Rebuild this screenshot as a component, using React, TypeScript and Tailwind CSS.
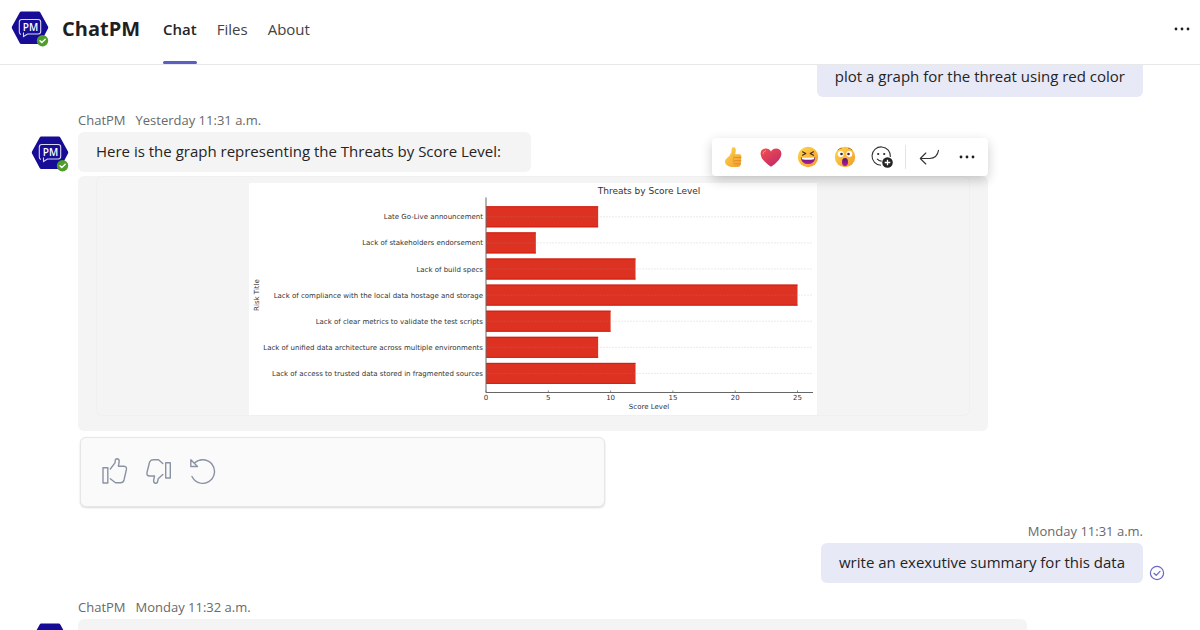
import { useState } from 'react';
import type { ReactNode } from 'react';

const threats = [
    { title: 'Late Go-Live announcement', score: 9 },
    { title: 'Lack of stakeholders endorsement', score: 4 },
    { title: 'Lack of build specs', score: 12 },
    { title: 'Lack of compliance with the local data hostage and storage', score: 25 },
    { title: 'Lack of clear metrics to validate the test scripts', score: 10 },
    { title: 'Lack of unified data architecture across multiple environments', score: 9 },
    { title: 'Lack of access to trusted data stored in fragmented sources', score: 12 },
];

const tabs = ['Chat', 'Files', 'About'];

const Avatar = () => (
    <svg viewBox="0 0 38 36" className="w-[38px] h-9 shrink-0" role="img" aria-label="ChatPM, available">
        <path d="M10.2 .5h17.6q1 0 1.5.9l7.7 14.2q.5 1 0 2l-7.7 14.4q-.5.9-1.5.9H10.2q-1 0-1.5-.9L1 17.6q-.5-1 0-2L8.7 1.4q.5-.9 1.5-.9z" fill="#170c96" />
        <path d="M10 23.5q-1.7-.6-1.7-2.5v-10q0-2.5 2.5-2.5h16.4q2.5 0 2.5 2.5v9.5q0 2.5-2.5 2.5H16.5L12.500 25.500V21.500" fill="none" stroke="#d9d7f2" strokeWidth="1.1" />
        <text x="19.5" y="19.500" textAnchor="middle" fontSize="10" fontWeight="600" fill="#fff" className="font-['Open_Sans',sans-serif]">PM</text>
        <circle cx="31.5" cy="29.7" r="5.7" fill="#4f9e2c" />
        <path d="M29 29.8l1.8 1.8 3.4-3.4" fill="none" stroke="#fff" strokeWidth="1.4" strokeLinecap="round" />
    </svg>
);

const Dots = () => (
    <svg viewBox="0 0 16 4" className="w-4 h-1" aria-hidden="true">
        <circle cx="2" cy="2" r="1.4" fill="#1f1f1f" />
        <circle cx="8" cy="2" r="1.4" fill="#1f1f1f" />
        <circle cx="14" cy="2" r="1.4" fill="#1f1f1f" />
    </svg>
);

const Gradients = () => (
    <svg className="absolute w-0 h-0" aria-hidden="true">
        <defs>
            <linearGradient id="skin" x1="0" y1="0" x2="1" y2="1">
                <stop offset="0" stopColor="#ffd84a" />
                <stop offset="1" stopColor="#f29a2e" />
            </linearGradient>
            <linearGradient id="heart" x1="0" y1="0" x2=".7" y2="1">
                <stop offset="0" stopColor="#f5504a" />
                <stop offset="1" stopColor="#c22a6b" />
            </linearGradient>
            <linearGradient id="mouth" x1="0" y1="0" x2="0" y2="1">
                <stop offset="0" stopColor="#5c1668" />
                <stop offset="1" stopColor="#b01ba5" />
            </linearGradient>
        </defs>
    </svg>
);

const Like = () => (
    <svg viewBox="0 0 22 22" className="w-[22px] h-[22px]">
        <path d="M3.5 12.5Q7 10 8.3 6.5L8.8 2.5Q9.2 1 10.8 1.2Q12.9 1.5 12.8 4.5L12.2 8.2H16.5Q18.3 8.4 18.3 10.2L17.8 18.5Q17.200 21 14.500 21H9Q6 21 3.3 18.8Q1.800 17.500 2 15.500Q2.200 13.600 3.500 12.500Z" fill="url(#skin)" />
        <path d="M11.500 11.500h6.500M11.300 14.700h6.600M11.800 17.800h5.800" stroke="#dc8526" strokeWidth=".8" strokeLinecap="round" />
        <path d="M11.500 9.500q-1.500.8-.6 2.300-1.100 1.400-.1 2.900-.7 1.500.5 2.800" fill="none" stroke="#e4952c" strokeWidth=".7" />
    </svg>
);

const Heart = () => (
    <svg viewBox="0 0 22 22" className="w-[22px] h-[22px]">
        <path d="M11 20.800Q1 14 .6 8.200Q.5 3.200 5.300 2.500Q9.300 2.200 11 5.500Q12.700 2.200 16.700 2.500Q21.500 3.200 21.400 8.200Q21 14 11 20.800Z" fill="url(#heart)" />
        <path d="M3 7.500q.4-2.400 2.600-2.800" fill="none" stroke="#ff8d80" strokeWidth="1" strokeLinecap="round" />
    </svg>
);

const Laugh = () => (
    <svg viewBox="0 0 22 22" className="w-[22px] h-[22px]">
        <circle cx="11" cy="11" r="10.2" fill="url(#skin)" />
        <path d="M5.5 5.8l3.3 1.7-3.3 1.7M16.5 5.8l-3.3 1.7 3.3 1.7" fill="none" stroke="#4a2b22" strokeWidth="1.2" strokeLinecap="round" strokeLinejoin="round" />
        <path d="M3.8 11.2h14.4q-.5 6.800-7.200 6.800t-7.200-6.800z" fill="url(#mouth)" />
        <path d="M4.5 11.2h13l-.5 2q-6 1-12 0z" fill="#fff" />
    </svg>
);

const Surprised = () => (
    <svg viewBox="0 0 22 22" className="w-[22px] h-[22px]">
        <circle cx="11" cy="11" r="10.2" fill="url(#skin)" />
        <path d="M4 3.8q1.5-1.6 3.5-1.6M18 3.8q-1.5-1.6-3.5-1.6" fill="none" stroke="#a5632a" strokeWidth=".8" strokeLinecap="round" />
        <circle cx="6.7" cy="8" r="3" fill="#fff" />
        <circle cx="15.3" cy="8" r="3" fill="#fff" />
        <circle cx="7.5" cy="8" r="1.3" fill="#3b2430" />
        <circle cx="14.5" cy="8" r="1.3" fill="#3b2430" />
        <ellipse cx="11" cy="16" rx="3" ry="3.9" fill="url(#mouth)" />
    </svg>
);

const AddReaction = () => (
    <svg viewBox="0 0 22 22" className="w-[22px] h-[22px]" fill="none">
        <path d="M10 19.3A9.2 9.2 0 1 1 19.4 11" stroke="#333" strokeWidth="1.1" />
        <circle cx="7.2" cy="8" r="1.1" fill="#222" />
        <circle cx="13.2" cy="8" r="1.1" fill="#222" />
        <path d="M6.3 13.2q1.6 1.9 4 1.9" stroke="#333" strokeWidth="1.1" strokeLinecap="round" />
        <circle cx="16.5" cy="16.5" r="5.3" fill="#242424" />
        <path d="M16.5 13.7v5.6M13.7 16.5h5.6" stroke="#fff" strokeWidth="1.3" />
    </svg>
);

const Reply = () => (
    <svg viewBox="0 0 22 22" className="w-[22px] h-[22px]" fill="none" stroke="#333" strokeWidth="1.1" strokeLinecap="round" strokeLinejoin="round">
        <path d="M6.8 7L1.300 12.500l5.500 5.500M1.500 12.500h9q7.800-.4 9-8.200" />
    </svg>
);

const reactions = [
    { label: 'Like', icon: <Like /> },
    { label: 'Heart', icon: <Heart /> },
    { label: 'Laugh', icon: <Laugh /> },
    { label: 'Surprised', icon: <Surprised /> },
    { label: 'More reactions', icon: <AddReaction /> },
];

const ToolButton = ({ label, children }: { label: string; children: ReactNode }) => (
    <button aria-label={label} className="flex w-[37px] h-9 items-center justify-center">
        {children}
    </button>
);

const ReactionBar = () => (
    <div className="absolute right-0 -top-[38px] z-10 flex h-[38px] items-center rounded bg-white px-[3px] shadow-[0_4px_12px_rgba(0,0,0,0.2)]">
        {reactions.map((r) => (
            <ToolButton key={r.label} label={r.label}>{r.icon}</ToolButton>
        ))}
        <div className="mx-[5px] h-6 w-px bg-[#e4e4e4]" />
        <ToolButton label="Reply"><Reply /></ToolButton>
        <ToolButton label="More options"><Dots /></ToolButton>
    </div>
);

const ThreatChart = () => {
    const x0 = 237;
    const unit = 12.46;
    const rowY = (i: number) => 33.8 + i * 26.1;

    return (
        <svg viewBox="0 0 568 232" className="w-full max-w-[568px] bg-white font-['DejaVu_Sans',sans-serif]" role="img" aria-label="Threats by Score Level">
            <text x="400" y="11" textAnchor="middle" fontSize="9" fill="#333">Threats by Score Level</text>
            {threats.map((t, i) => (
                <g key={t.title}>
                    <rect x={x0} y={rowY(i) - 10.5} width={t.score * unit} height="21" fill="#dd3222" />
                    <path d={`M${x0} ${rowY(i) - 10}h${t.score * unit}m0 20H${x0}`} stroke="#cf1f10" strokeWidth="1" fill="none" />
                    <path d={`M${x0} ${rowY(i)}H564`} stroke="#999" strokeOpacity=".3" strokeDasharray="2 1" strokeWidth=".7" />
                    <text x="234" y={rowY(i) + 2.5} textAnchor="end" fontSize="7" fill="#333">{t.title}</text>
                </g>
            ))}
            <path d="M237 14.5V209.5H564" fill="none" stroke="#666" strokeWidth="1" />
            {[0, 5, 10, 15, 20, 25].map((n) => (
                <g key={n}>
                    <path d={`M${x0 + n * unit} 209.5v-2`} stroke="#666" strokeWidth=".8" />
                    <text x={x0 + n * unit} y="217" textAnchor="middle" fontSize="7" fill="#333">{n}</text>
                </g>
            ))}
            <text x="400" y="226" textAnchor="middle" fontSize="7" fill="#333">Score Level</text>
            <text transform="translate(10 112) rotate(-90)" textAnchor="middle" fontSize="7" fill="#333">Risk Title</text>
        </svg>
    );
};

const FeedbackCard = () => (
    <div className="mt-1.5 ml-0.5 flex h-[70px] max-w-[525px] items-center gap-[18px] rounded-md border border-[#e6e6e6] bg-[#fafafa] px-[21px] pb-0.5 shadow-[0_1px_2px_rgba(0,0,0,0.15)]">
        <button aria-label="Good response">
            <svg viewBox="0 0 26 26" className="w-[26px] h-[26px]" fill="none" stroke="#8a93a3" strokeWidth="1.4" strokeLinejoin="round" strokeLinecap="round">
                <path d="M1 9.8h4.8V25H1z" />
                <path d="M8.3 11L13 4.8L13.3 2Q13.6.8 15 .8Q17.3.9 17.2 3.7L16.4 8.2H22Q25 8.5 24.4 11.5L22 22Q21.3 24.7 18.5 24.7H13.5L8.3 20.8" />
            </svg>
        </button>
        <button aria-label="Bad response">
            <svg viewBox="0 0 26 26" className="w-[26px] h-[26px]" fill="none" stroke="#8a93a3" strokeWidth="1.4" strokeLinejoin="round" strokeLinecap="round">
                <path d="M19.7 4.8h4.6V20h-4.6z" />
                <path d="M16.8 5.5L12.5 1.7H7Q4.5 1.7 3.6 4L1 14.5Q.5 17.8 3.5 18H8.5L7.6 22.5Q7.6 25.2 9.6 25.3Q11.2 25.4 11.5 24L12.2 20.8L16.8 16.5" />
            </svg>
        </button>
        <button aria-label="Regenerate response">
            <svg viewBox="0 0 26 26" className="w-[26px] h-[26px]" fill="none" stroke="#8a93a3" strokeWidth="1.4" strokeLinejoin="round" strokeLinecap="round">
                <path d="M4.5 5A11.8 11.8 0 1 1 2 18.5" />
                <path d="M.8 1.800V8.500H7.500z" />
            </svg>
        </button>
    </div>
);

const Meta = ({ children }: { children: ReactNode }) => (
    <div className="mb-0.5 flex h-5 items-center gap-2.5 text-[13px] leading-5 text-[#696969]">{children}</div>
);

const BotMessage = ({ time, children }: { time: string; children: ReactNode }) => (
    <div className="flex pl-[31px]">
        <div className="w-[47px] shrink-0 pt-[26px]">
            <Avatar />
        </div>
        <div className="min-w-0 flex-1">
            <Meta>
                <span>ChatPM</span>
                <span>{time}</span>
            </Meta>
            {children}
        </div>
    </div>
);

const UserMessage = ({ time, text, seen }: { time?: string; text: string; seen?: boolean }) => (
    <div className="flex items-end justify-end">
        <div className="flex flex-col items-end">
            {time && <Meta>{time}</Meta>}
            <div className="flex h-10 items-center rounded-md bg-[#e8e9f7] px-[18px] pb-0.5 text-[15px] text-[#242424]">{text}</div>
        </div>
        <div className="w-[57px] shrink-0 pl-1.5 pb-0.5">
            {seen && (
                <svg viewBox="0 0 16 16" className="w-4 h-4" fill="none" stroke="#6a67c8" strokeWidth="1.2" role="img" aria-label="Sent">
                    <circle cx="8" cy="8" r="6.6" />
                    <path d="M5 8.3l2.2 2L11 6.3" strokeLinecap="round" strokeLinejoin="round" />
                </svg>
            )}
        </div>
    </div>
);

export default function App() {
    const [active, setActive] = useState('Chat');

    return (
        <div className="flex h-screen flex-col overflow-hidden bg-white font-['Open_Sans',sans-serif]">
            <Gradients />
            <header className="relative z-20 flex h-[65px] shrink-0 items-stretch border-b border-[#e8e8e8] bg-white pl-[11px] pr-2.5">
                <div className="flex items-center gap-[13px] pb-1.5">
                    <Avatar />
                    <h1 className="text-xl font-bold text-[#1f1f1f]">ChatPM</h1>
                </div>
                <nav className="ml-[23px] flex gap-5">
                    {tabs.map((tab) => (
                        <button
                            key={tab}
                            onClick={() => setActive(tab)}
                            className={`relative pb-1.5 text-[15px] ${tab === active ? 'font-semibold text-[#242424]' : 'text-[#424242]'}`}
                        >
                            {tab}
                            {tab === active && <span className="absolute inset-x-0 bottom-0 h-[3px] rounded-sm bg-[#5b5fc0]" />}
                        </button>
                    ))}
                </nav>
                <button aria-label="More options" className="ml-auto pb-1.5">
                    <Dots />
                </button>
            </header>

            <main className="min-h-0 flex-1 overflow-hidden">
                <div className="-mt-2 flex flex-col">
                    <UserMessage text="plot a graph for the threat using red color" />

                    <div className="mt-[13px]">
                        <BotMessage time="Yesterday 11:31 a.m.">
                            <div className="flex h-10 w-fit min-w-[453px] items-center rounded-md bg-[#f4f4f4] px-[18px] pb-0.5 text-[15px] text-[#242424]">
                                Here is the graph representing the Threats by Score Level:
                            </div>
                            <div className="relative mt-1 max-w-[910px] rounded-md bg-[#f4f4f4] px-[18px] pb-[15px]">
                                <ReactionBar />
                                <div className="flex justify-center rounded-md border border-[#f0f0f0] pt-1.5">
                                    <ThreatChart />
                                </div>
                            </div>
                            <FeedbackCard />
                        </BotMessage>
                    </div>

                    <div className="mt-3.5">
                        <UserMessage time="Monday 11:31 a.m." text="write an exexutive summary for this data" seen />
                    </div>

                    <div className="mt-3.5">
                        <BotMessage time="Monday 11:32 a.m.">
                            <div className="h-10 max-w-[949px] rounded-md bg-[#f4f4f4]" />
                        </BotMessage>
                    </div>
                </div>
            </main>
        </div>
    );
}
